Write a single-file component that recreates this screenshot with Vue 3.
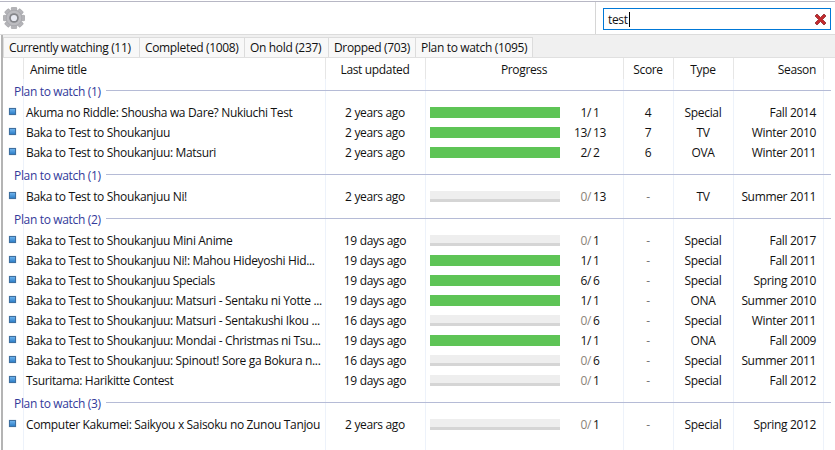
<script setup>
const columns = [
  { key: 'title', label: 'Anime title' },
  { key: 'updated', label: 'Last updated' },
  { key: 'progress', label: 'Progress' },
  { key: 'score', label: 'Score' },
  { key: 'type', label: 'Type' },
  { key: 'season', label: 'Season' },
]
const tabs = ['Currently watching (11)', 'Completed (1008)', 'On hold (237)', 'Dropped (703)', 'Plan to watch (1095)']
const groups = [
  { label: 'Plan to watch (1)', rows: [
    ['Akuma no Riddle: Shousha wa Dare? Nukiuchi Test', '2 years ago', 1, 1, '4', 'Special', 'Fall 2014'],
    ['Baka to Test to Shoukanjuu', '2 years ago', 13, 13, '7', 'TV', 'Winter 2010'],
    ['Baka to Test to Shoukanjuu: Matsuri', '2 years ago', 2, 2, '6', 'OVA', 'Winter 2011'],
  ]},
  { label: 'Plan to watch (1)', rows: [
    ['Baka to Test to Shoukanjuu Ni!', '2 years ago', 0, 13, '-', 'TV', 'Summer 2011'],
  ]},
  { label: 'Plan to watch (2)', rows: [
    ['Baka to Test to Shoukanjuu Mini Anime', '19 days ago', 0, 1, '-', 'Special', 'Fall 2017'],
    ['Baka to Test to Shoukanjuu Ni!: Mahou Hideyoshi Hid...', '19 days ago', 1, 1, '-', 'Special', 'Fall 2011'],
    ['Baka to Test to Shoukanjuu Specials', '19 days ago', 6, 6, '-', 'Special', 'Spring 2010'],
    ['Baka to Test to Shoukanjuu: Matsuri - Sentaku ni Yotte ...', '19 days ago', 1, 1, '-', 'ONA', 'Summer 2010'],
    ['Baka to Test to Shoukanjuu: Matsuri - Sentakushi Ikou ...', '16 days ago', 0, 6, '-', 'Special', 'Winter 2011'],
    ['Baka to Test to Shoukanjuu: Mondai - Christmas ni Tsu...', '19 days ago', 1, 1, '-', 'ONA', 'Fall 2009'],
    ['Baka to Test to Shoukanjuu: Spinout! Sore ga Bokura n...', '16 days ago', 0, 6, '-', 'Special', 'Summer 2011'],
    ['Tsuritama: Harikitte Contest', '19 days ago', 0, 1, '-', 'Special', 'Fall 2012'],
  ]},
  { label: 'Plan to watch (3)', rows: [
    ['Computer Kakumei: Saikyou x Saisoku no Zunou Tanjou', '2 years ago', 0, 1, '-', 'Special', 'Spring 2012'],
  ]},
]
const gearTeeth = [0, 45, 90, 135, 180, 225, 270, 315]
</script>

<template>
  <div class="app">
    <div class="toolbar">
      <div class="tools">
        <svg class="gear" width="22" height="22" viewBox="0 0 22 22">
          <g transform="translate(11 11)">
            <rect v-for="a in gearTeeth" :key="a" x="-2.7" y="-10.8" width="5.4" height="6" rx="1" fill="#b4b4b8" stroke="#9a9a9e" stroke-width=".6" :transform="`rotate(${a})`" />
            <circle r="7.8" fill="#bcbcc0" stroke="#a0a0a4" stroke-width=".6" />
            <circle r="4.8" fill="#85868a" />
            <circle r="3.1" fill="#e8eaf2" />
          </g>
        </svg>
      </div>
      <div class="search">
        <span class="query">test</span>
        <svg class="clear" width="13" height="13" viewBox="0 0 13 13">
          <path d="M1 3 3 1l3.5 3.5L10 1l2 2-3.5 3.5L12 10l-2 2-3.5-3.5L3 12l-2-2 3.5-3.5z" fill="#c42a2e" stroke="#8e2a2c" stroke-width=".8" stroke-linejoin="round" />
        </svg>
      </div>
    </div>
    <div class="body">
      <div class="tabs">
        <div v-for="t in tabs" :key="t" class="tab">{{ t }}</div>
      </div>
      <div class="head">
        <div class="gutter"></div>
        <div v-for="c in columns" :key="c.key" class="cell" :class="'c-' + c.key">{{ c.label }}</div>
      </div>
      <div class="list">
        <div class="rules">
          <i class="r1"></i><i class="r2"></i><i class="r3"></i><i class="r4"></i><i class="r5"></i><i class="r6"></i><i class="r7"></i>
        </div>
        <template v-for="(g, i) in groups" :key="i">
          <div class="group"><span>{{ g.label }}</span><b></b></div>
          <div v-for="r in g.rows" :key="r[0]" class="row">
            <div class="gutter"><span class="dot"></span></div>
            <div class="cell c-title">{{ r[0] }}</div>
            <div class="cell c-updated">{{ r[1] }}</div>
            <div class="cell c-progress">
              <div class="bar" :class="{ done: r[2] > 0 }"></div>
              <div class="count">
                <span class="num" :class="{ zero: r[2] === 0 }">{{ r[2] }}/</span>
                <span class="den">{{ r[3] }}</span>
              </div>
            </div>
            <div class="cell c-score" :class="{ none: r[4] === '-' }">{{ r[4] }}</div>
            <div class="cell c-type">{{ r[5] }}</div>
            <div class="cell c-season">{{ r[6] }}</div>
          </div>
        </template>
      </div>
    </div>
  </div>
</template>

<style>
html, body { margin: 0; background: #fff; overflow: hidden; }
</style>

<style scoped>
.app {
  width: 835px; height: 450px; overflow: hidden; box-sizing: border-box; background: #fff;
  font: 12px/16px "Open Sans", "Noto Sans", sans-serif; letter-spacing: -0.34px; color: #111;
  padding-top: 1px; display: flex; flex-direction: column;
}
.toolbar {
  display: flex; height: 34px; flex: none; box-sizing: border-box;
  border-top: 1px solid #b7b7c4; border-bottom: 1px solid #dcdcdc;
}
.tools { width: 596px; border-right: 1px solid #d6d6d6; box-sizing: border-box; padding: 5px 0 0 3px; }
.gear { display: block; }
.search {
  margin: 6px 0 0 7px; width: 228px; height: 22px; box-sizing: border-box;
  border: 1px solid #0078d7; display: flex; align-items: center; justify-content: space-between;
  padding: 0 3px 0 4px;
}
.query { border-right: 1px solid #000; line-height: 15px; padding-right: 1px; }
.body { flex: 1; display: flex; flex-direction: column; border-left: 2px solid #b4b4b4; margin-left: 1px; }
.tabs { display: flex; flex: none; height: 22px; background: #f0f0f0; box-sizing: border-box; padding-top: 2px; }
.tab {
  box-sizing: border-box; height: 20px; padding: 0 5px; line-height: 19px; flex: none;
  background: #f8f8f8; border: 1px solid #dcdcdc; border-bottom: 0; margin-right: -1px; white-space: nowrap;
}
.tab:nth-child(1) { width: 137px; }
.tab:nth-child(2) { width: 106px; }
.tab:nth-child(3) { width: 85px; }
.tab:nth-child(4) { width: 88px; }
.tab:nth-child(5) { width: 118px; }
.head { display: flex; flex: none; height: 21px; line-height: 24px; border-top: 1px solid #e0e0e0; }
.head .cell, .head .gutter { box-shadow: 1px 0 0 #e6e6e6; height: 24px; }
.gutter { width: 20px; flex: none; }
.cell { flex: none; box-sizing: border-box; white-space: nowrap; overflow: hidden; }
.c-title { width: 302px; padding-left: 6px; }
.head .c-title { padding-left: 7px; }
.row .c-title { padding-left: 3px; }
.c-updated { width: 100px; text-align: center; }
.c-progress { width: 198px; text-align: center; }
.c-score { width: 50px; text-align: center; }
.c-type { width: 60px; text-align: center; }
.c-season { width: 90px; text-align: right; padding-right: 7px; }
.list { position: relative; flex: 1; }
.rules { position: absolute; inset: 0; pointer-events: none; }
.rules i { position: absolute; top: 0; bottom: 0; width: 1px; background: #edf2fa; }
.r1 { left: 20px; } .r2 { left: 322px; } .r3 { left: 422px; } .r4 { left: 620px; } .r5 { left: 670px; } .r6 { left: 730px; } .r7 { left: 820px; }
.group {
  position: relative; height: 24px; display: flex; align-items: center; gap: 5px;
  padding: 0 0 0 11px; color: #333a9a; width: 828px; box-sizing: border-box;
}
.group span { white-space: nowrap; margin-top: 2px; }
.group b { flex: 1; height: 1px; background: #b5bbd6; margin-top: -1px; }
.row { position: relative; display: flex; height: 20px; line-height: 20px; }
.dot {
  display: block; width: 7px; height: 7px; margin: 5px 0 0 6px; box-sizing: border-box;
  background: linear-gradient(#6cb2ec, #2f7fc8); border: 1px solid #3f6f9f; box-shadow: 0 0 1px #9cb8d4;
}
.row .c-progress { display: flex; align-items: flex-start; text-align: left; padding-left: 5px; }
.bar {
  width: 130px; height: 11px; margin-top: 4px; box-sizing: border-box;
  background: #eeeeee; border-bottom: 3px solid #d5d5d5; flex: none;
}
.bar.done { background: #5ec456; border-bottom: 0; }
.count { display: flex; margin-left: 1px; }
.num { width: 30px; text-align: right; }
.zero { color: #8b8378; }
.den { margin-left: 2px; }
.none { color: #777; }
</style>
